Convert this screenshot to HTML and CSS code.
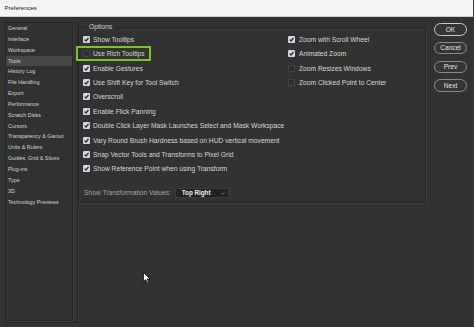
FILE: index.html
```html
<!DOCTYPE html>
<html>
<head>
<meta charset="utf-8">
<title>Preferences</title>
<link rel="stylesheet" href="styles.css">
</head>
<body>
<div class="dialog">
  <div class="titlebar">Preferences</div>
  <div class="main">
    <div class="nav-frame">
      <ul class="nav">
        <li>General</li>
        <li>Interface</li>
        <li>Workspace</li>
        <li class="active">Tools</li>
        <li>History Log</li>
        <li>File Handling</li>
        <li>Export</li>
        <li>Performance</li>
        <li>Scratch Disks</li>
        <li>Cursors</li>
        <li>Transparency &amp; Gamut</li>
        <li>Units &amp; Rulers</li>
        <li>Guides, Grid &amp; Slices</li>
        <li>Plug-ins</li>
        <li>Type</li>
        <li>3D</li>
        <li>Technology Previews</li>
      </ul>
    </div>
    <fieldset class="options">
      <legend>Options</legend>
      <div class="cols">
        <div class="col col-left">
          <div class="row"><span class="cb on"><svg viewBox="0 0 7 7"><path d="M1.6 3.6 L3 5 L5.5 2"/></svg></span>Show Tooltips</div>
          <div class="row marked"><span class="cb off focus"></span>Use Rich Tooltips</div>
          <div class="row"><span class="cb on"><svg viewBox="0 0 7 7"><path d="M1.6 3.6 L3 5 L5.5 2"/></svg></span>Enable Gestures</div>
          <div class="row"><span class="cb on"><svg viewBox="0 0 7 7"><path d="M1.6 3.6 L3 5 L5.5 2"/></svg></span>Use Shift Key for Tool Switch</div>
          <div class="row"><span class="cb on"><svg viewBox="0 0 7 7"><path d="M1.6 3.6 L3 5 L5.5 2"/></svg></span>Overscroll</div>
          <div class="row"><span class="cb on"><svg viewBox="0 0 7 7"><path d="M1.6 3.6 L3 5 L5.5 2"/></svg></span>Enable Flick Panning</div>
          <div class="row"><span class="cb on"><svg viewBox="0 0 7 7"><path d="M1.6 3.6 L3 5 L5.5 2"/></svg></span>Double Click Layer Mask Launches Select and Mask Workspace</div>
          <div class="row"><span class="cb on"><svg viewBox="0 0 7 7"><path d="M1.6 3.6 L3 5 L5.5 2"/></svg></span>Vary Round Brush Hardness based on HUD vertical movement</div>
          <div class="row"><span class="cb on"><svg viewBox="0 0 7 7"><path d="M1.6 3.6 L3 5 L5.5 2"/></svg></span>Snap Vector Tools and Transforms to Pixel Grid</div>
          <div class="row"><span class="cb on"><svg viewBox="0 0 7 7"><path d="M1.6 3.6 L3 5 L5.5 2"/></svg></span>Show Reference Point when using Transform</div>
        </div>
        <div class="col col-right">
          <div class="row"><span class="cb on"><svg viewBox="0 0 7 7"><path d="M1.6 3.6 L3 5 L5.5 2"/></svg></span>Zoom with Scroll Wheel</div>
          <div class="row"><span class="cb on"><svg viewBox="0 0 7 7"><path d="M1.6 3.6 L3 5 L5.5 2"/></svg></span>Animated Zoom</div>
          <div class="row"><span class="cb off"></span>Zoom Resizes Windows</div>
          <div class="row"><span class="cb off"></span>Zoom Clicked Point to Center</div>
        </div>
      </div>
      <div class="transform">
        <span class="transform-label">Show Transformation Values:</span>
        <span class="select">Top Right<svg class="chev" viewBox="0 0 5 3"><path d="M0.5 0.5 L2.5 2.5 L4.5 0.5"/></svg></span>
      </div>
    </fieldset>
    <div class="buttons">
      <button class="btn default">OK</button>
      <button class="btn">Cancel</button>
      <button class="btn">Prev</button>
      <button class="btn">Next</button>
    </div>
  </div>
  <svg class="cursor" viewBox="0 0 8 12" width="8" height="12"><path d="M0.5 0.5 L0.5 9.5 L2.7 7.6 L4.2 10.9 L5.6 10.3 L4.1 7.1 L7 7.1 Z"/></svg>
</div>
</body>
</html>
```

FILE: styles.css
```css
* { box-sizing: border-box; }
html, body { margin: 0; padding: 0; }
body {
  width: 474px;
  height: 327px;
  overflow: hidden;
  background: #323232;
  font-family: "Liberation Sans", Arial, sans-serif;
}
.dialog {
  position: relative;
  height: 327px;
  background: #323232;
  border-right: 1px solid #3c3c3c;
}
.titlebar {
  height: 17px;
  line-height: 17px;
  padding-left: 4.5px;
  background: #f3f3f3;
  color: #1c1c1c;
  font-size: 6px;
  border-bottom: 1px solid #cfcfcf;
}
.main {
  display: flex;
  align-items: flex-start;
  margin-top: 5px;
}

/* sidebar */
.nav-frame {
  margin-left: 5px;
  width: 73px;
  height: 301px;
  padding: 0 4px 1px 0;
  border-right: 1px solid #282828;
  border-bottom: 1px solid #282828;
}
.nav {
  list-style: none;
  margin: 0;
  padding: 0;
  height: 299px;
  border: 1px solid #262626;
  background: #313131;
  box-shadow: 1px 1px 0 #3a3a3a;
}
.nav li {
  height: 10.85px;
  line-height: 10.85px;
  padding-left: 2px;
  font-size: 5.4px;
  color: #d2d2d2;
  white-space: nowrap;
}
.nav li.active {
  background: #474747;
}

/* options group */
.options {
  margin: 1px 0 0 0;
  width: 348px;
  padding: 1.1px 4px 4px 4px;
  border: 1px solid #272727;
  box-shadow: 1px 1px 0 #3d3d3d;
  min-width: 0;
}
.options legend {
  margin-left: 4px;
  padding: 0 2px;
  font-size: 6.7px;
  line-height: 8px;
  color: #cfcfcf;
}
.cols {
  display: flex;
}
.col {
  display: flex;
  flex-direction: column;
  align-items: flex-start;
}
.col-left { width: 205px; }
.row {
  position: relative;
  display: flex;
  align-items: center;
  height: 14.4px;
  font-size: 6.7px;
  color: #d6d6d6;
  white-space: nowrap;
}
.col-right .row { gap: 0; }
.cb {
  flex: none;
  width: 7px;
  height: 7px;
  margin-right: 3px;
  border-radius: 1px;
  display: flex;
}
.col-right .cb { margin-right: 4px; }
.cb svg { width: 7px; height: 7px; }
.cb path {
  fill: none;
  stroke: #2d2d2d;
  stroke-width: 1.3;
}
.cb.on { background: #d4d4d6; }
.cb.off {
  background: #2c2c2c;
  border: 1px solid #444;
}
.cb.focus {
  background: #2b2f3c;
  border-color: #3f4555;
}
.row.marked::after {
  content: "";
  position: absolute;
  top: 0;
  bottom: 0;
  left: -7px;
  right: -6px;
  border: 2.5px solid #76c81f;
}

.transform {
  display: flex;
  align-items: center;
  margin-top: 11.9px;
  height: 10px;
  font-size: 6.7px;
}
.transform-label {
  margin-left: 1px;
  color: #a3a3a3;
}
.select {
  position: relative;
  display: flex;
  align-items: center;
  margin-left: 4.3px;
  width: 54px;
  height: 10px;
  padding-left: 5.5px;
  background: #222;
  border: 1px solid #3a3a3a;
  color: #ececec;
  font-weight: bold;
  font-size: 6.3px;
}
.chev {
  position: absolute;
  right: 3px;
  top: 3.5px;
  width: 4px;
  height: 3px;
}
.chev path {
  fill: none;
  stroke: #9a9a9a;
  stroke-width: 0.8;
}

/* buttons */
.buttons {
  display: flex;
  flex-direction: column;
  margin-left: 8px;
  margin-top: 1.3px;
  gap: 6.2px;
}
.btn {
  width: 33px;
  height: 12.5px;
  padding: 0;
  border-radius: 7px;
  border: 1px solid #8a8a8a;
  background: #353535;
  color: #e2e2e2;
  font-family: "Liberation Sans", Arial, sans-serif;
  font-size: 6.6px;
  line-height: 10px;
}
.btn.default {
  border: 1.4px solid #cacaca;
}

.cursor {
  position: absolute;
  left: 143px;
  top: 272px;
}
.cursor path {
  fill: #fff;
  stroke: #000;
  stroke-width: 0.7;
}
```
